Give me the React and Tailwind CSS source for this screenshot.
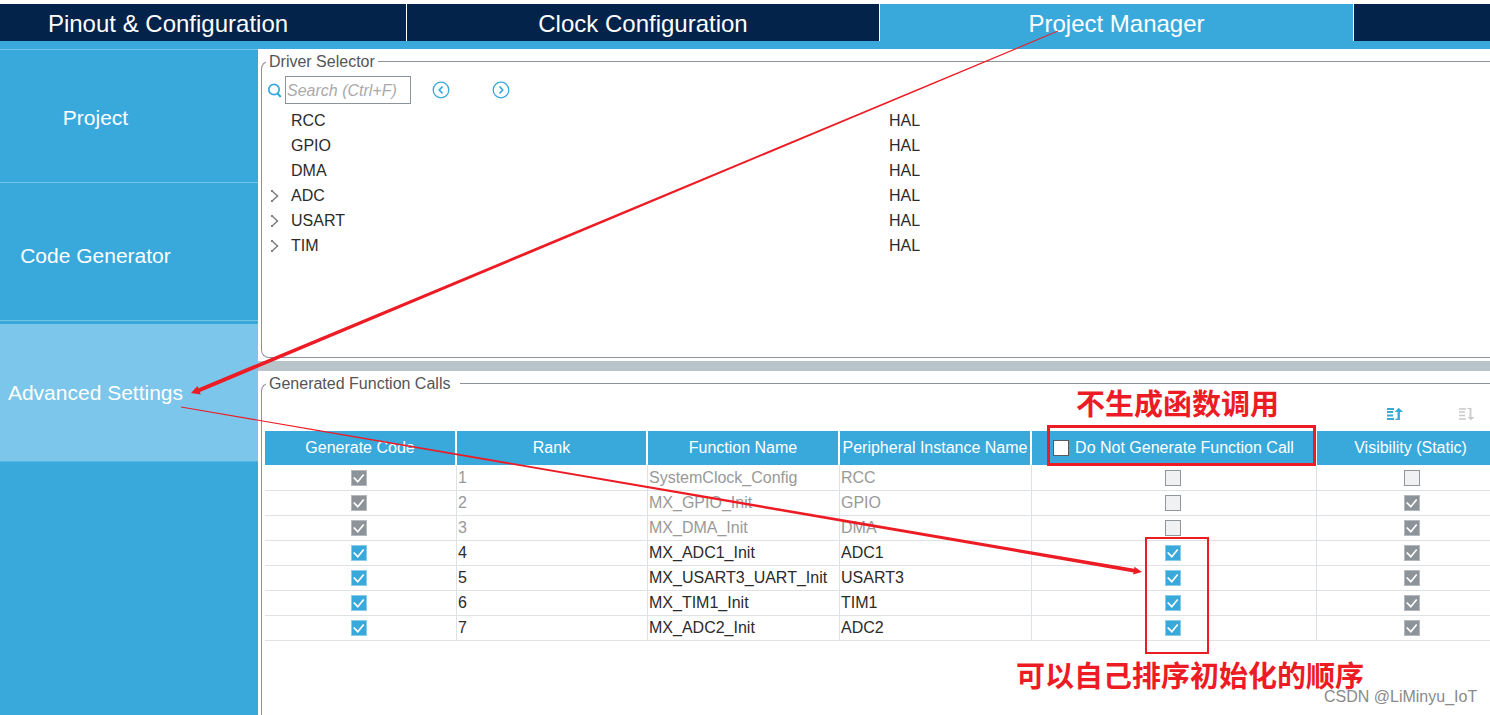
import { useState } from 'react';
import clsx from 'clsx';

const tabs = [
  { name: 'Pinout & Configuration', className: 'w-[407px] pr-[70px] bg-[#03234b]' },
  { name: 'Clock Configuration', className: 'w-[473px] bg-[#03234b]' },
  { name: 'Project Manager', className: 'w-[474px] bg-[#39a9dc]' },
];

const drivers = [
  { name: 'RCC', driver: 'HAL' },
  { name: 'GPIO', driver: 'HAL' },
  { name: 'DMA', driver: 'HAL' },
  { name: 'ADC', driver: 'HAL', expandable: true },
  { name: 'USART', driver: 'HAL', expandable: true },
  { name: 'TIM', driver: 'HAL', expandable: true },
];

const initialCalls = [
  { rank: 1, fn: 'SystemClock_Config', instance: 'RCC', locked: true, skip: false, visible: false },
  { rank: 2, fn: 'MX_GPIO_Init', instance: 'GPIO', locked: true, skip: false, visible: true },
  { rank: 3, fn: 'MX_DMA_Init', instance: 'DMA', locked: true, skip: false, visible: true },
  { rank: 4, fn: 'MX_ADC1_Init', instance: 'ADC1', generate: true, skip: true, visible: true },
  { rank: 5, fn: 'MX_USART3_UART_Init', instance: 'USART3', generate: true, skip: true, visible: true },
  { rank: 6, fn: 'MX_TIM1_Init', instance: 'TIM1', generate: true, skip: true, visible: true },
  { rank: 7, fn: 'MX_ADC2_Init', instance: 'ADC2', generate: true, skip: true, visible: true },
];

function Checkbox({ checked, disabled, label, id, onChange }) {
  return (
    <span className="inline-grid size-4 align-middle">
      <input
        type="checkbox"
        id={id}
        aria-label={label}
        checked={checked}
        disabled={disabled}
        onChange={onChange}
        className={clsx(
          'col-start-1 row-start-1 size-4 appearance-none border',
          checked && disabled && 'border-[#b3b9be] bg-[#8c9399]',
          checked && !disabled && 'border-[#8accea] bg-[#39a9dc]',
          !checked && disabled && 'border-[#8f979d] bg-[#f0f1f3]',
          !checked && !disabled && 'border-[#555b60] bg-white'
        )}
      />
      {checked && (
        <svg viewBox="0 0 16 16" className="pointer-events-none col-start-1 row-start-1 size-4">
          <path d="M2.7 7.5 L6.8 11.7 L12.7 4.5" fill="none" stroke="#fff" strokeWidth="1.7" />
        </svg>
      )}
    </span>
  );
}

function SearchIcon() {
  return (
    <svg viewBox="0 0 15 15" className="size-[15px] shrink-0" fill="none" stroke="#39a9dc">
      <circle cx="7" cy="6.5" r="5.2" strokeWidth="1.7" />
      <path d="M10.3 10.3 L13.8 14" strokeWidth="2.2" />
    </svg>
  );
}

function CircleArrow({ direction }) {
  return (
    <svg viewBox="0 0 18 18" className="size-[18px]" fill="none" stroke="#39a9dc">
      <circle cx="9" cy="9" r="7.8" strokeWidth="1.3" />
      <path
        d={direction === 'prev' ? 'M10.5 5.5 L7.3 9 L10.5 12.5' : 'M7.5 5.5 L10.7 9 L7.5 12.5'}
        strokeWidth="1.7"
      />
    </svg>
  );
}

function ExpandIcon() {
  return (
    <svg viewBox="0 0 10 14" className="h-3.5 w-2.5" fill="none" stroke="#808080">
      <path d="M1.5 1.5 L7.5 7 L1.5 12.5" strokeWidth="1.5" />
      <path d="M1 1 h2 v2 h-2 Z M1 11 h2 v2 h-2 Z M7 6 h1 v2 h-1 Z" fill="#808080" stroke="none" />
    </svg>
  );
}

function SortIcon({ up }) {
  return (
    <svg viewBox="0 0 16 14" className="h-3.5 w-4" fill="none" stroke={up ? '#39a9dc' : '#c9c9c9'}>
      <path d="M0 2 H7 M0 5 H6 M0 8.5 H6 M0 12 H7" strokeWidth={up ? 2 : 1.4} />
      {up ? (
        <>
          <path d="M11.7 13 V3" strokeWidth="2.4" />
          <path d="M7.8 5 L11.7 0.8 L16 5 Z" fill="#39a9dc" stroke="none" />
          <path d="M8.5 12.3 H12" strokeWidth="1.4" />
        </>
      ) : (
        <>
          <path d="M11.5 1 V11" strokeWidth="1.8" />
          <path d="M8.5 1.5 H12" strokeWidth="1.2" />
          <path d="M8.5 10 L12 13.2 L15.5 10 Z" fill="#c9c9c9" stroke="none" />
        </>
      )}
    </svg>
  );
}

function TabBar() {
  return (
    <nav className="border-b-8 border-[#39a9dc]">
      <div className="flex h-[37px] bg-[#03234b]">
        {tabs.map((tab) => (
          <button
            key={tab.name}
            className={clsx('h-full shrink-0 border-r border-white pt-0.5 text-2xl text-white', tab.className)}
          >
            {tab.name}
          </button>
        ))}
      </div>
    </nav>
  );
}

function SideBar() {
  return (
    <aside className="flex w-[258px] shrink-0 flex-col bg-[#39a9dc] text-[21px] text-white">
      <button className="h-[134px] border-y border-[#74c3e8] pt-1 pr-[67px]">Project</button>
      <button className="h-[138px] border-b border-[#74c3e8] pt-2 pr-[67px]">Code Generator</button>
      <button className="mt-[3px] h-[138px] border-b border-[#56b5e1] bg-[#7bc6ea] pr-[67px]">
        Advanced Settings
      </button>
    </aside>
  );
}

function DriverSelector() {
  const [search, setSearch] = useState('');

  return (
    <fieldset className="mb-[3px] ml-[3px] min-h-[309px] min-w-0 rounded-l-lg border border-r-0 border-[#8c9399]">
      <legend className="ml-1 h-6 px-[3px] pt-px leading-6 text-[#555]">Driver Selector</legend>
      <div className="mt-[3px] flex items-center pl-[5px]">
        <label htmlFor="driver-search" aria-label="Search">
          <SearchIcon />
        </label>
        <input
          id="driver-search"
          type="text"
          value={search}
          onChange={(e) => setSearch(e.target.value)}
          placeholder="Search (Ctrl+F)"
          className="ml-[3px] h-7 w-[126px] border border-[#8c9399] px-px pt-0.5 italic placeholder:text-[#aaa]"
        />
        <button aria-label="Previous" className="ml-[21px]">
          <CircleArrow direction="prev" />
        </button>
        <button aria-label="Next" className="ml-[42px]">
          <CircleArrow direction="next" />
        </button>
      </div>
      <ul className="mt-1 text-[#2b2b2b]">
        {drivers.map((item) => (
          <li key={item.name} className="flex h-[25px] items-center pl-2">
            <span className="flex w-[21px] items-center">
              {item.expandable && (
                <button aria-label={`Expand ${item.name}`}>
                  <ExpandIcon />
                </button>
              )}
            </span>
            <span className="w-[598px]">{item.name}</span>
            <span>{item.driver}</span>
          </li>
        ))}
      </ul>
    </fieldset>
  );
}

function FunctionCalls() {
  const [calls, setCalls] = useState(initialCalls);
  const [skipAll, setSkipAll] = useState(false);

  const toggle = (rank, key) => {
    setCalls(calls.map((call) => (call.rank === rank ? { ...call, [key]: !call[key] } : call)));
  };

  const th = 'h-[35px] border-r-2 border-b border-white bg-[#39a9dc] p-0 font-normal whitespace-nowrap text-white';
  const td = 'h-[25px] border-r border-b border-[#dfe2e5] py-0 pr-0 pl-px leading-6 whitespace-nowrap';

  return (
    <fieldset className="ml-[3px] min-w-0 flex-1 rounded-tl-lg border-t border-l border-[#8c9399]">
      <legend className="ml-1 h-6 pt-px pr-2.5 pl-[3px] leading-6 text-[#555]">Generated Function Calls</legend>
      <div className="flex h-9 items-center justify-end gap-14 pt-0.5 pr-[15px]">
        <button aria-label="Move up">
          <SortIcon up />
        </button>
        <button aria-label="Move down" disabled>
          <SortIcon />
        </button>
      </div>
      <div className="ml-[3px] overflow-hidden">
        <table className="w-[calc(100%+16px)] table-fixed border-separate border-spacing-0">
          <colgroup>
            <col className="w-48" />
            <col className="w-[191px]" />
            <col className="w-48" />
            <col className="w-48" />
            <col className="w-[285px]" />
            <col />
          </colgroup>
          <thead>
            <tr>
              <th className={th}>Generate Code</th>
              <th className={th}>Rank</th>
              <th className={th}>Function Name</th>
              <th className={th}>Peripheral Instance Name</th>
              <th className={th}>
                <span className="flex items-center justify-center gap-1.5">
                  <Checkbox id="skip-all" checked={skipAll} onChange={() => setSkipAll(!skipAll)} />
                  <label htmlFor="skip-all">Do Not Generate Function Call</label>
                </span>
              </th>
              <th className={th}>Visibility (Static)</th>
            </tr>
          </thead>
          <tbody>
            {calls.map((call) => (
              <tr key={call.rank} className={call.locked ? 'text-[#999]' : 'text-[#2b2b2b]'}>
                <td className={td}>
                  <span className="flex justify-center pr-1">
                    <Checkbox
                      label={`Generate ${call.fn}`}
                      checked={call.locked || call.generate}
                      disabled={call.locked}
                      onChange={() => toggle(call.rank, 'generate')}
                    />
                  </span>
                </td>
                <td className={td}>{call.rank}</td>
                <td className={td}>{call.fn}</td>
                <td className={td}>{call.instance}</td>
                <td className={td}>
                  <span className="flex justify-center pr-1">
                    <Checkbox
                      label={`Do not call ${call.fn}`}
                      checked={call.skip}
                      disabled={call.locked}
                      onChange={() => toggle(call.rank, 'skip')}
                    />
                  </span>
                </td>
                <td className={td}>
                  <span className="flex justify-center">
                    <Checkbox label={`${call.fn} static`} checked={call.visible} disabled />
                  </span>
                </td>
              </tr>
            ))}
          </tbody>
        </table>
      </div>
    </fieldset>
  );
}

// Red arrows, boxes and notes drawn over the window
function Annotations() {
  const note =
    "absolute text-[29px] leading-8 font-bold whitespace-nowrap text-[#ed1c24] font-['Noto_Sans_CJK_SC',sans-serif]";

  return (
    <div className="pointer-events-none absolute inset-0 overflow-hidden">
      <svg width="1490" height="715" viewBox="0 0 1490 715" className="absolute top-0 left-0">
        <g fill="#ed1c24">
          <path d="M1058 30.6 L198.6 388.2 L197.5 386 L191 393 L200.8 394.5 L199.9 392 L1058 31.6 Z" />
          <path d="M181 406.6 L1134.3 568.8 L1134.5 566.8 L1142 572 L1133 574.4 L1133.7 572.4 L181 407.4 Z" />
        </g>
        <g fill="none" stroke="#ed1c24">
          <rect x="1048.5" y="426.5" width="266" height="38" strokeWidth="3" />
          <rect x="1146" y="538" width="62" height="115" strokeWidth="2" />
        </g>
      </svg>
      <p className={clsx(note, 'top-[386px] left-[1076px]')}>不生成函数调用</p>
      <p className={clsx(note, 'top-[658px] left-[1016px]')}>可以自己排序初始化的顺序</p>
      <p className="absolute top-[685px] left-[1324px] leading-6 whitespace-nowrap text-[#8a8a8a]">
        CSDN @LiMinyu_IoT
      </p>
    </div>
  );
}

export default function App() {
  return (
    <div className="relative flex min-h-screen flex-col overflow-hidden bg-white pt-1 font-['Liberation_Sans',Arial,sans-serif] text-base">
      <TabBar />
      <div className="flex flex-1">
        <SideBar />
        <main className="flex min-w-0 flex-1 flex-col">
          <DriverSelector />
          <div className="h-2.5 bg-[#b9c4ca]" />
          <FunctionCalls />
        </main>
      </div>
      <Annotations />
    </div>
  );
}
